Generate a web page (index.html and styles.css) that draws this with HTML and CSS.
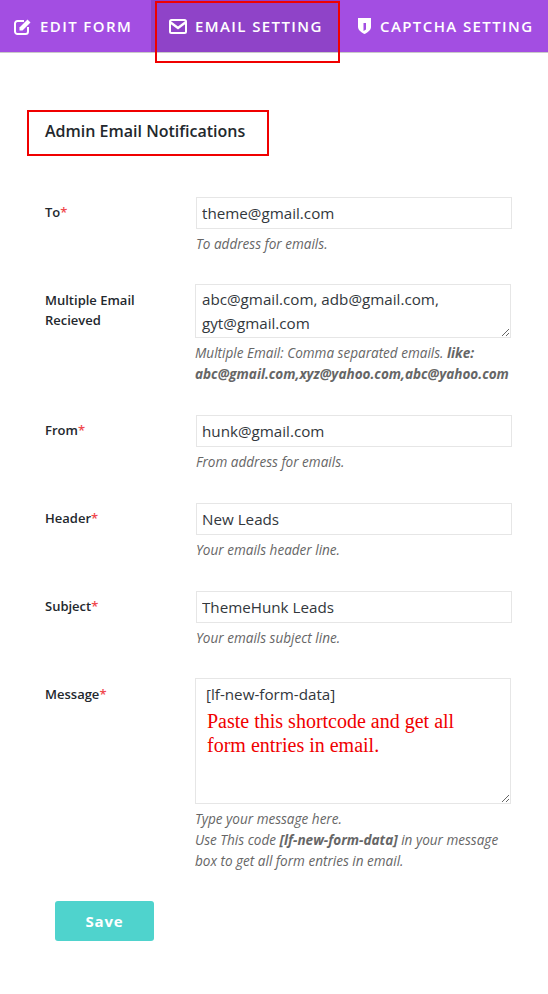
FILE: index.html
```html
<!DOCTYPE html>
<html lang="en">
<head>
  <meta charset="UTF-8">
  <meta name="viewport" content="width=device-width, initial-scale=1.0">
  <title>Email Setting</title>
  <link rel="stylesheet" href="styles.css">
</head>
<body>
  <nav class="tabs">
    <a class="tab tab-edit">
      <svg class="tab-icon" viewBox="0 0 18 17"><path d="M10 3H3.500A2.500 2.500 0 0 0 1 5.500v8A2.500 2.500 0 0 0 3.500 16h8a2.500 2.500 0 0 0 2.500-2.500V9" fill="none" stroke="#fff" stroke-width="2"/><path d="M5.500 9.500L13.500 1.500l3 3-8 8h-3z" fill="#fff"/></svg>
      EDIT FORM
    </a>
    <a class="tab tab-email active">
      <svg class="tab-icon" viewBox="0 0 18 15"><rect x="1" y="1" width="16" height="13" rx="1.500" fill="none" stroke="#fff" stroke-width="2"/><path d="M1 3l8 6 8-6" fill="none" stroke="#fff" stroke-width="2.400"/></svg>
      EMAIL SETTING
    </a>
    <a class="tab tab-captcha">
      <svg class="tab-icon icon-shield" viewBox="0 0 13 16"><path d="M0 0h13v9c0 3-3.500 5.500-6.500 7C3.500 14.500 0 12 0 9z" fill="#fff"/><path d="M5.500 5h2.500v6.500L5.500 13z" fill="#a34ee2"/></svg>
      CAPTCHA SETTING
    </a>
  </nav>
  <div class="mark mark-tab"></div>

  <main class="content">
    <h2 class="title">Admin Email Notifications</h2>
    <div class="mark mark-title"></div>

    <form class="form">
      <div class="row row-to">
        <label>To<span class="req">*</span></label>
        <div class="field">
          <input type="text" value="theme@gmail.com">
          <p class="note">To address for emails.</p>
        </div>
      </div>

      <div class="row row-multi">
        <label>Multiple Email Recieved</label>
        <div class="field shift">
          <textarea class="area-multi">abc@gmail.com, adb@gmail.com, gyt@gmail.com</textarea>
          <p class="note">Multiple Email: Comma separated emails. <b>like: abc@gmail.com,xyz@yahoo.com,abc@yahoo.com</b></p>
        </div>
      </div>

      <div class="row row-from">
        <label>From<span class="req">*</span></label>
        <div class="field">
          <input type="text" value="hunk@gmail.com">
          <p class="note">From address for emails.</p>
        </div>
      </div>

      <div class="row row-plain">
        <label>Header<span class="req">*</span></label>
        <div class="field">
          <input type="text" value="New Leads">
          <p class="note">Your emails header line.</p>
        </div>
      </div>

      <div class="row row-plain">
        <label>Subject<span class="req">*</span></label>
        <div class="field">
          <input type="text" value="ThemeHunk Leads">
          <p class="note">Your emails subject line.</p>
        </div>
      </div>

      <div class="row row-message">
        <label>Message<span class="req">*</span></label>
        <div class="field shift">
          <div class="area-wrap">
            <textarea class="area-message">[lf-new-form-data]</textarea>
            <p class="paste">Paste this shortcode and get all form entries in email.</p>
          </div>
          <p class="note">Type your message here.<br>Use This code <b>[lf-new-form-data]</b> in your message box to get all form entries in email.</p>
        </div>
      </div>

      <button type="button" class="save">Save</button>
    </form>
  </main>
</body>
</html>
```

FILE: styles.css
```css
body {
  margin: 0;
  font-family: "Open Sans", "Noto Sans", sans-serif;
  background-color: #ffffff;
  color: #32373c;
}
.tabs {
  display: flex;
  height: 52px;
  background-color: #a34ee2;
  border-bottom: 1px solid #c9c9c9;
}
.tab {
  display: flex;
  align-items: center;
  box-sizing: border-box;
  color: #ffffff;
  font-size: 15px;
  font-weight: 600;
  letter-spacing: 1.4px;
  white-space: nowrap;
}
.tab-edit {
  width: 151px;
  padding-left: 14px;
}
.tab-email {
  width: 189px;
  padding-left: 18px;
}
.tab-captcha {
  padding-left: 18px;
}
.tab.active {
  background-color: #8f43c8;
}
.tab-icon {
  width: 18px;
  height: 15px;
  margin-right: 8px;
}
.tab-edit .tab-icon {
  height: 17px;
}
.icon-shield {
  width: 13px;
  height: 16px;
  margin-right: 9px;
}
.mark {
  position: absolute;
  box-sizing: border-box;
  border: 2px solid #f00000;
}
.mark-tab {
  left: 155px;
  top: 1px;
  width: 185px;
  height: 62px;
}
.mark-title {
  left: 27px;
  top: 110px;
  width: 242px;
  height: 46px;
}
.content {
  padding: 67px 36px 0 45px;
}
.title {
  margin: 0 0 55px;
  font-size: 16px;
  line-height: 22px;
  font-weight: 600;
  color: #23282d;
}
.row {
  display: grid;
  grid-template-columns: 151px 316px;
}
.row label {
  padding: 5px 30px 0 0;
  font-size: 13px;
  font-weight: 600;
  line-height: 20px;
  color: #23282d;
}
.req {
  color: #f0484d;
}
.row-to { height: 87px; }
.row-multi { height: 131px; }
.row-from { height: 88px; }
.row-plain { height: 88px; }
.row-message { height: 222px; }
.shift {
  margin-left: -1px;
}
.row-message .field {
  margin-top: -1px;
}
.row-multi label {
  padding-top: 6px;
}
input,
textarea {
  display: block;
  box-sizing: border-box;
  width: 316px;
  margin: 0;
  padding: 0 5px;
  border: 1px solid #dddddd;
  outline: 1px solid #e6e6e6;
  outline-offset: -1px;
  font-family: "Open Sans", "Noto Sans", sans-serif;
  font-size: 15.200px;
  color: #32373c;
  background-color: #ffffff;
}
input {
  height: 32px;
}
.area-multi {
  height: 54px;
  padding: 2px 6px 0;
  line-height: 24px;
  overflow: hidden;
}
.area-wrap {
  position: relative;
}
.area-message {
  height: 126px;
  padding: 4px 10px;
  line-height: 22px;
  overflow: hidden;
}
.paste {
  position: absolute;
  left: 12px;
  top: 31px;
  width: 270px;
  margin: 0;
  font-family: "Liberation Serif", serif;
  font-size: 20px;
  line-height: 24px;
  color: #f00000;
}
.note {
  margin: 5px 0 0;
  font-size: 13.550px;
  line-height: 21px;
  font-style: italic;
  color: #666666;
}
.note b {
  font-weight: 700;
}
.save {
  display: block;
  width: 99px;
  height: 40px;
  margin-left: 10px;
  border: none;
  border-radius: 3px;
  background-color: #4fd3cd;
  color: #ffffff;
  font-family: "Open Sans", "Noto Sans", sans-serif;
  font-size: 15px;
  font-weight: 700;
  letter-spacing: 0.8px;
}
```
